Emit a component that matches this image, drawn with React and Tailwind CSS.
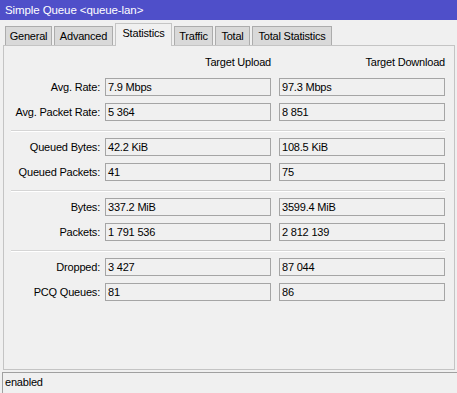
import React from "react";

const tabs = [
  { name: "General", w: "w-[47px]" },
  { name: "Advanced", w: "w-[59px]" },
  { name: "Statistics", w: "w-[57px]", active: true },
  { name: "Traffic", w: "w-[39px]" },
  { name: "Total", w: "w-[35px]" },
  { name: "Total Statistics", w: "w-[80px]" },
];

const groups = [
  [
    ["Avg. Rate:", "7.9 Mbps", "97.3 Mbps"],
    ["Avg. Packet Rate:", "5 364", "8 851"],
  ],
  [
    ["Queued Bytes:", "42.2 KiB", "108.5 KiB"],
    ["Queued Packets:", "41", "75"],
  ],
  [
    ["Bytes:", "337.2 MiB", "3599.4 MiB"],
    ["Packets:", "1 791 536", "2 812 139"],
  ],
  [
    ["Dropped:", "3 427", "87 044"],
    ["PCQ Queues:", "81", "86"],
  ],
];

function Field({ value }) {
  return (
    <div className="w-[166px] h-[18px] border border-[#a5a5a5] bg-[#f0f0f0] pl-[2px] leading-[16px] whitespace-nowrap">
      {value}
    </div>
  );
}

function Row({ label, up, down }) {
  return (
    <div className="flex h-[18px] items-center">
      <div className="w-[96px] text-right whitespace-nowrap">{label}</div>
      <div className="ml-[5px]">
        <Field value={up} />
      </div>
      <div className="ml-[8px]">
        <Field value={down} />
      </div>
    </div>
  );
}

export default function App() {
  return (
    <div
      className="w-[457px] h-[393px] bg-[#f0f0f0] flex flex-col overflow-hidden text-[11px] tracking-[-0.2px] text-black"
      style={{ fontFamily: '"Liberation Sans", Arial, sans-serif' }}
    >
      {/* title bar */}
      <div className="h-[20px] bg-[#4f4fc9] text-white text-[11.5px] leading-[20px] pl-[5px] tracking-[-0.1px]">
        Simple Queue &lt;queue-lan&gt;
      </div>

      {/* tabs */}
      <div className="h-[25px] flex items-end pl-[5px] gap-[2px] relative z-10">
        {tabs.map((t) =>
          t.active ? (
            <div
              key={t.name}
              className={`${t.w} h-[23px] -mb-px bg-[#f0f0f0] border border-b-0 border-[#c4c4c4] text-center leading-[18px] pb-[3px]`}
            >
              {t.name}
            </div>
          ) : (
            <div
              key={t.name}
              className={`${t.w} h-[19px] bg-[#d9d9d9] border border-b-0 border-[#acacac] text-center leading-[19px]`}
            >
              {t.name}
            </div>
          )
        )}
      </div>

      {/* panel */}
      <div className="ml-[3px] w-[452px] h-[325px] border border-[#c4c4c4] bg-[#f0f0f0] pt-[8px]">
        <div className="flex h-[16px] leading-[16px]">
          <div className="w-[267px] text-right">Target Upload</div>
          <div className="w-[174px] text-right">Target Download</div>
        </div>

        <div className="mt-[8px]">
          {groups.map((g, gi) => (
            <div key={gi}>
              {gi > 0 && (
                <div className="ml-[7px] w-[434px] h-[2px] mt-[9px] mb-[6px] border-t border-[#d5d5d5] border-b border-b-white" />
              )}
              <div className="flex flex-col gap-[7px]">
                {g.map(([label, up, down]) => (
                  <Row key={label} label={label} up={up} down={down} />
                ))}
              </div>
            </div>
          ))}
        </div>
      </div>

      {/* status bar */}
      <div className="mt-[2px] ml-[2px] flex-1 border-l border-t border-[#a0a0a0] pl-[2px] leading-[19px]">
        enabled
      </div>
    </div>
  );
}
